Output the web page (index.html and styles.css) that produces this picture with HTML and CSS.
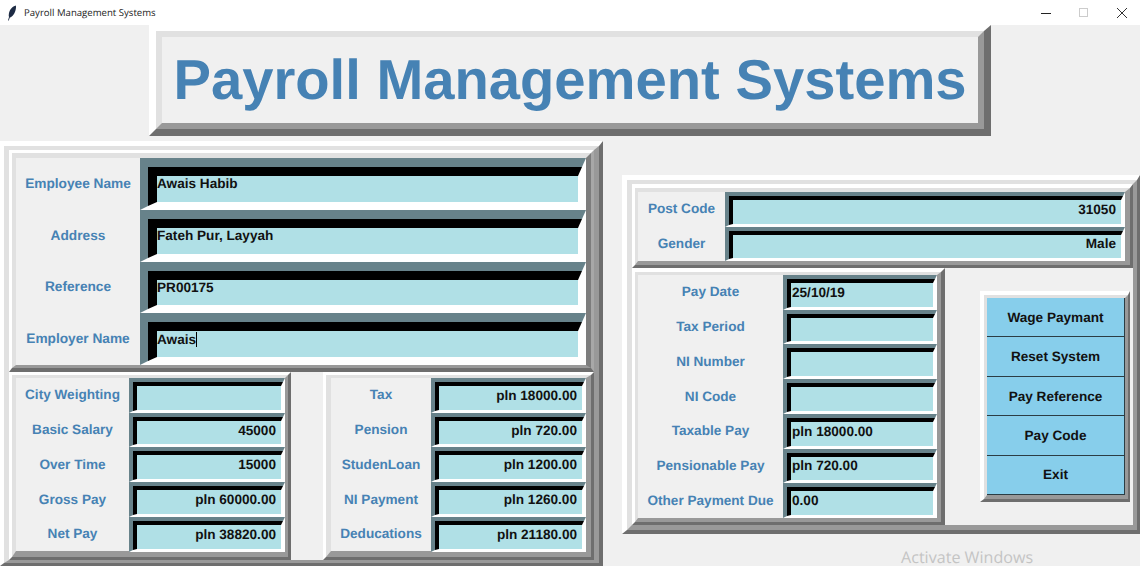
FILE: index.html
```html
<!DOCTYPE html>
<html lang="en">
<head>
    <meta charset="UTF-8">
    <title>Payroll Management Systems</title>
    <link rel="stylesheet" href="styles.css">
</head>
<body>

    <div id="titlebar">
        <svg class="feather" width="10" height="16" viewBox="0 0 10 16"><path d="M8.8 0.6C5.6 1.4 2.8 4.6 1.9 8.4 1.6 9.8 1.7 11 2 12L1 15.4 1.8 15.6 2.8 12.6C5.6 11.8 7.8 8.6 8.6 5 9 3.400 9.200 1.800 8.800 0.600Z" fill="#1d2b44"/></svg>
        <span class="win-title">Payroll Management Systems</span>
        <div class="win-buttons">
            <svg width="12" height="12" viewBox="0 0 12 12"><path d="M1 6.500H11" stroke="#222" stroke-width="1"/></svg>
            <svg width="12" height="12" viewBox="0 0 12 12"><rect x="1.500" y="1.500" width="8" height="8" fill="none" stroke="#ccc"/></svg>
            <svg width="12" height="12" viewBox="0 0 12 12"><path d="M1 1L11 11M11 1L1 11" stroke="#333" stroke-width="1"/></svg>
        </div>
    </div>

    <div id="header">
        <div class="ridge title-frame"><div class="ridge-in">
            <h1 class="title">Payroll Management Systems</h1>
        </div></div>
    </div>

    <div id="panels">
        <!-- left side -->
        <div class="ridge main-left"><div class="ridge-in">
            <div class="ridge employee-frame"><div class="ridge-in form">
                <div class="label">Employee Name</div>
                <div class="entry big"><div class="entry-in">Awais Habib</div></div>
                <div class="label">Address</div>
                <div class="entry big"><div class="entry-in">Fateh Pur, Layyah</div></div>
                <div class="label">Reference</div>
                <div class="entry big"><div class="entry-in">PR00175</div></div>
                <div class="label">Employer Name</div>
                <div class="entry big"><div class="entry-in">Awais<span class="caret"></span></div></div>
            </div></div>

            <div class="money-row">
                <div class="ridge city-frame"><div class="ridge-in form">
                    <div class="label">City Weighting</div>
                    <div class="entry"><div class="entry-in right"></div></div>
                    <div class="label">Basic Salary</div>
                    <div class="entry"><div class="entry-in right">45000</div></div>
                    <div class="label">Over Time</div>
                    <div class="entry"><div class="entry-in right">15000</div></div>
                    <div class="label">Gross Pay</div>
                    <div class="entry"><div class="entry-in right">pln 60000.00</div></div>
                    <div class="label">Net Pay</div>
                    <div class="entry"><div class="entry-in right">pln 38820.00</div></div>
                </div></div>

                <div class="ridge tax-frame"><div class="ridge-in form">
                    <div class="label">Tax</div>
                    <div class="entry"><div class="entry-in right">pln 18000.00</div></div>
                    <div class="label">Pension</div>
                    <div class="entry"><div class="entry-in right">pln 720.00</div></div>
                    <div class="label">StudenLoan</div>
                    <div class="entry"><div class="entry-in right">pln 1200.00</div></div>
                    <div class="label">NI Payment</div>
                    <div class="entry"><div class="entry-in right">pln 1260.00</div></div>
                    <div class="label">Deducations</div>
                    <div class="entry"><div class="entry-in right">pln 21180.00</div></div>
                </div></div>
            </div>
        </div></div>

        <!-- right side -->
        <div class="ridge main-right"><div class="ridge-in">
            <div class="ridge post-frame"><div class="ridge-in form">
                <div class="label">Post Code</div>
                <div class="entry"><div class="entry-in right">31050</div></div>
                <div class="label">Gender</div>
                <div class="entry"><div class="entry-in right">Male</div></div>
            </div></div>

            <div class="pay-row">
                <div class="ridge pay-frame"><div class="ridge-in form">
                    <div class="label">Pay Date</div>
                    <div class="entry"><div class="entry-in">25/10/19</div></div>
                    <div class="label">Tax Period</div>
                    <div class="entry"><div class="entry-in"></div></div>
                    <div class="label">NI Number</div>
                    <div class="entry"><div class="entry-in"></div></div>
                    <div class="label">NI Code</div>
                    <div class="entry"><div class="entry-in"></div></div>
                    <div class="label">Taxable Pay</div>
                    <div class="entry"><div class="entry-in">pln 18000.00</div></div>
                    <div class="label">Pensionable Pay</div>
                    <div class="entry"><div class="entry-in">pln 720.00</div></div>
                    <div class="label">Other Payment Due</div>
                    <div class="entry"><div class="entry-in">0.00</div></div>
                </div></div>

                <div class="ridge button-frame"><div class="ridge-in">
                    <div class="btn">Wage Paymant</div>
                    <div class="btn">Reset System</div>
                    <div class="btn">Pay Reference</div>
                    <div class="btn">Pay Code</div>
                    <div class="btn">Exit</div>
                </div></div>
            </div>
        </div></div>
    </div>

    <div class="watermark">Activate Windows</div>

</body>
</html>
```

FILE: styles.css
```css
* {
    box-sizing: border-box;
}
html, body {
    margin: 0;
    height: 566px;
    overflow: hidden;
}
body {
    width: 1140px;
    background-color: #f0f0f0;
    font-family: "Liberation Sans", Arial, sans-serif;
    text-rendering: geometricPrecision;
    position: relative;
}

/* window chrome */
#titlebar {
    height: 25px;
    background-color: #fff;
    display: flex;
    align-items: center;
    padding-left: 7px;
}
.feather {
    margin-right: 7px;
}
.win-title {
    font-family: "Open Sans", sans-serif;
    font-size: 9.6px;
    color: #222;
}
.win-buttons {
    margin-left: auto;
    display: flex;
    gap: 26px;
    padding-right: 12px;
}

/* every frame is two stacked bevels */
.ridge {
    border-style: solid;
    border-color: #fff #6e6e6e #6e6e6e #fff;
}
.ridge-in {
    height: 100%;
    border-style: solid;
    border-color: #e1e1e1 #999 #999 #e1e1e1;
    background-color: #f0f0f0;
}

#header {
    padding-left: 149px;
    height: 116px;
}
.title-frame {
    width: 842px;
    height: 111px;
    border-width: 6px 7px 7px 7px;
}
.title-frame .ridge-in {
    border-width: 6px;
    display: flex;
    align-items: center;
    justify-content: center;
}
.title {
    margin: 0;
    font-size: 56.2px;
    font-weight: bold;
    color: #4682b4;
    white-space: nowrap;
    padding-bottom: 2px;
}

#panels {
    display: flex;
    align-items: flex-start;
}

/* left side */
.main-left {
    width: 603px;
    height: 425px;
    border-width: 5px 4px 3px 4px;
}
.main-left > .ridge-in {
    border-width: 4px 5px 3px 5px;
}
.employee-frame {
    height: 222px;
    border-width: 3px 3px 4px 3px;
    border-right-color: #a8a8a8;
}
.employee-frame > .ridge-in {
    border-width: 5px 5px 3px 4px;
    border-right-color: #7d7d7d;
    grid-template-columns: 124px 1fr;
}
.money-row {
    display: flex;
    justify-content: space-between;
}
.city-frame, .tax-frame {
    height: 188px;
    border-width: 3px 3px 3px 3px;
}
.city-frame {
    width: 282px;
}
.tax-frame {
    width: 271px;
}
.city-frame > .ridge-in {
    border-width: 3px 3px 6px 4px;
    grid-template-columns: 113px 1fr;
}
.tax-frame > .ridge-in {
    border-width: 3px 5px 6px 5px;
    grid-template-columns: 100px 1fr;
}

/* right side */
.main-right {
    width: 518px;
    height: 359px;
    margin: 34px 0 0 19px;
    border-width: 5px 3px 4px 5px;
}
.main-right > .ridge-in {
    border-width: 4px 4px 5px 5px;
}
.post-frame {
    height: 84px;
    border-width: 4px 3px 3px 3px;
}
.post-frame > .ridge-in {
    border-width: 4px 5px 4px 3px;
    grid-template-columns: 87px 1fr;
}
.pay-row {
    display: flex;
    align-items: flex-start;
}
.pay-frame {
    width: 313px;
    height: 257px;
    border-width: 4px 4px 3px 3px;
}
.pay-frame > .ridge-in {
    border-width: 3px 4px 4px 3px;
    grid-template-columns: 145px 1fr;
}
.button-frame {
    width: 150px;
    height: 211px;
    margin: 23px 0 0 35px;
    border-width: 4px 2px 3px 4px;
}
.button-frame > .ridge-in {
    border-width: 3px 3px 4px 3px;
    display: flex;
    flex-direction: column;
}

/* form rows */
.form {
    display: grid;
    grid-auto-rows: 34.72px;
}
.employee-frame .form {
    grid-auto-rows: 51.75px;
}
.post-frame .form {
    grid-auto-rows: 34.5px;
}
.label {
    display: flex;
    align-items: center;
    justify-content: center;
    font-size: 13.6px;
    font-weight: bold;
    color: #4682b4;
    padding-bottom: 1px;
}
.employee-frame .label {
    font-size: 13.7px;
}

/* sunken entries */
.entry {
    border-style: solid;
    border-width: 4px 2px 2px 4px;
    border-color: #67828a #fff #fff #67828a;
}
.entry-in {
    height: 100%;
    border-style: solid;
    border-width: 4px 2px 1px 4px;
    border-color: #000 #fff #fff #000;
    background-color: #b0e0e6;
    display: flex;
    align-items: center;
    padding: 0 0 5px 1px;
    font-size: 13.6px;
    font-weight: bold;
    color: #111;
}
.entry-in.right {
    justify-content: flex-end;
    padding-right: 5px;
}
.entry.big {
    border-width: 9px 4px 4px 8px;
}
.entry.big .entry-in {
    border-width: 9px 4px 4px 9px;
    padding: 0 0 10px 0;
}
.caret {
    display: inline-block;
    width: 1px;
    height: 15px;
    background-color: #000;
}

.btn {
    flex: 1;
    display: flex;
    align-items: center;
    justify-content: center;
    background-color: #87ceeb;
    border-right: 1px solid #2b3d44;
    border-bottom: 1px solid #2b3d44;
    font-size: 13.6px;
    font-weight: bold;
    color: #111;
}

.watermark {
    position: absolute;
    left: 901px;
    top: 549px;
    font-family: "Open Sans", sans-serif;
    font-size: 16.1px;
    line-height: 17px;
    color: #c4c4c4;
}
```
